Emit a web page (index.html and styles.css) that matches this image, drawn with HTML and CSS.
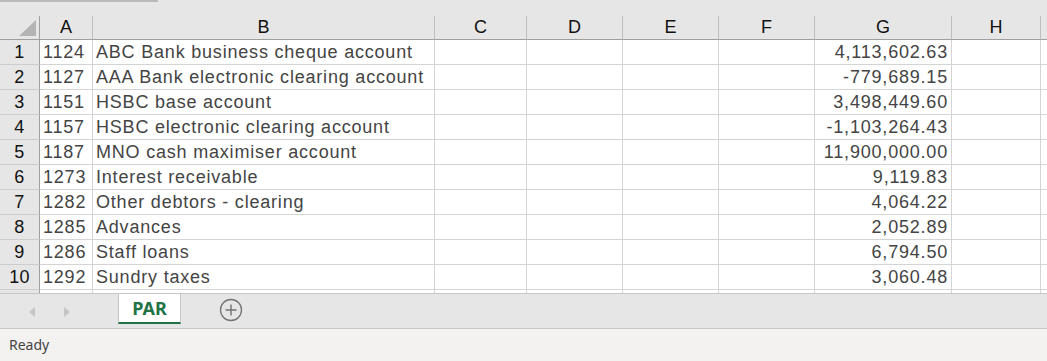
FILE: index.html
```html
<html lang="en">
<head>
    <meta charset="UTF-8">
    <title>PAR</title>
    <link rel="stylesheet" href="styles.css">
</head>
<body>
    <div class="window">
        <div class="top-strip"><div class="scroll-line"></div></div>
        <div class="sheet">
            <!-- header row -->
            <div class="hd corner">
                <svg width="17" height="16" viewBox="0 0 17 16"><polygon points="17,0 17,16 0,16" fill="#b4b4b4"/></svg>
            </div>
            <div class="hd">A</div>
            <div class="hd">B</div>
            <div class="hd">C</div>
            <div class="hd">D</div>
            <div class="hd">E</div>
            <div class="hd">F</div>
            <div class="hd">G</div>
            <div class="hd">H</div>
            <div class="hd"></div>

            <div class="rh">1</div><div class="c">1124</div><div class="c">ABC Bank business cheque account</div><div class="c"></div><div class="c"></div><div class="c"></div><div class="c"></div><div class="c num">4,113,602.63</div><div class="c"></div><div class="c"></div>
            <div class="rh">2</div><div class="c">1127</div><div class="c">AAA Bank electronic clearing account</div><div class="c"></div><div class="c"></div><div class="c"></div><div class="c"></div><div class="c num">-779,689.15</div><div class="c"></div><div class="c"></div>
            <div class="rh">3</div><div class="c">1151</div><div class="c">HSBC base account</div><div class="c"></div><div class="c"></div><div class="c"></div><div class="c"></div><div class="c num">3,498,449.60</div><div class="c"></div><div class="c"></div>
            <div class="rh">4</div><div class="c">1157</div><div class="c">HSBC electronic clearing account</div><div class="c"></div><div class="c"></div><div class="c"></div><div class="c"></div><div class="c num">-1,103,264.43</div><div class="c"></div><div class="c"></div>
            <div class="rh">5</div><div class="c">1187</div><div class="c">MNO cash maximiser account</div><div class="c"></div><div class="c"></div><div class="c"></div><div class="c"></div><div class="c num">11,900,000.00</div><div class="c"></div><div class="c"></div>
            <div class="rh">6</div><div class="c">1273</div><div class="c">Interest receivable</div><div class="c"></div><div class="c"></div><div class="c"></div><div class="c"></div><div class="c num">9,119.83</div><div class="c"></div><div class="c"></div>
            <div class="rh">7</div><div class="c">1282</div><div class="c">Other debtors - clearing</div><div class="c"></div><div class="c"></div><div class="c"></div><div class="c"></div><div class="c num">4,064.22</div><div class="c"></div><div class="c"></div>
            <div class="rh">8</div><div class="c">1285</div><div class="c">Advances</div><div class="c"></div><div class="c"></div><div class="c"></div><div class="c"></div><div class="c num">2,052.89</div><div class="c"></div><div class="c"></div>
            <div class="rh">9</div><div class="c">1286</div><div class="c">Staff loans</div><div class="c"></div><div class="c"></div><div class="c"></div><div class="c"></div><div class="c num">6,794.50</div><div class="c"></div><div class="c"></div>
            <div class="rh">10</div><div class="c">1292</div><div class="c">Sundry taxes</div><div class="c"></div><div class="c"></div><div class="c"></div><div class="c"></div><div class="c num">3,060.48</div><div class="c"></div><div class="c"></div>

            <!-- partly visible row 11 -->
            <div class="rh part"></div><div class="c part"></div><div class="c part"></div><div class="c part"></div><div class="c part"></div><div class="c part"></div><div class="c part"></div><div class="c part"></div><div class="c part"></div><div class="c part"></div>
        </div>

        <div class="tabbar">
            <div class="nav">
                <svg width="8" height="10" viewBox="0 0 8 10"><polygon points="7,0 7,10 1,5" fill="#c6c6c6"/></svg>
                <svg width="8" height="10" viewBox="0 0 8 10"><polygon points="1,0 1,10 7,5" fill="#c6c6c6"/></svg>
            </div>
            <div class="tab">PAR</div>
            <div class="add">
                <svg width="24" height="24" viewBox="0 0 24 24">
                    <circle cx="12" cy="12" r="10.5" fill="none" stroke="#737373" stroke-width="1.3"/>
                    <path d="M12 6.5v11M6.5 12h11" stroke="#737373" stroke-width="1.4"/>
                </svg>
            </div>
        </div>

        <div class="status">Ready</div>
    </div>
</body>
</html>
```

FILE: styles.css
```css
* {
  box-sizing: border-box;
}

body {
  margin: 0;
  background: #e6e6e6;
  font-family: "Liberation Sans", Arial, sans-serif;
}

.window {
  width: 1047px;
  height: 361px;
  overflow: hidden;
  display: flex;
  flex-direction: column;
}

.top-strip {
  height: 16px;
  background: #e6e6e6;
}

.scroll-line {
  width: 158px;
  height: 2px;
  background: #b9b9b9;
}

/* the grid of cells */
.sheet {
  display: grid;
  grid-template-columns: 40px 53px 342px 92px 96px 96px 96px 137px 89px 96px;
  grid-template-rows: 24px repeat(10, 25px) 3px;
  background: #fff;
  font-size: 18px;
  letter-spacing: 0.8px;
  width: 1047px;
  overflow: hidden;
}

.hd {
  background: #e6e6e6;
  border-right: 1px solid #bdbdbd;
  border-bottom: 1px solid #9f9f9f;
  color: #111;
  text-align: center;
  line-height: 23px;
  letter-spacing: 0;
}

.corner {
  display: flex;
  justify-content: flex-end;
  align-items: flex-start;
  padding: 4px 3px 0 0;
  border-right: 1px solid #9f9f9f;
}

.corner svg {
  display: block;
}

.rh {
  background: #e6e6e6;
  border-right: 1px solid #9f9f9f;
  border-bottom: 1px solid #cdcdcd;
  color: #111;
  text-align: center;
  line-height: 24px;
  letter-spacing: 0.3px;
}

.c {
  border-right: 1px solid #d4d4d4;
  border-bottom: 1px solid #d4d4d4;
  color: #444;
  padding: 0 3px 0 3px;
  line-height: 24px;
  white-space: nowrap;
  overflow: visible;
}

.num {
  text-align: right;
  padding-right: 3px;
}

.part {
  border-bottom: none;
}

/* sheet tabs */
.tabbar {
  height: 35px;
  background: #e6e6e6;
  border-top: 1px solid #c6c6c6;
  display: flex;
  align-items: flex-start;
}

.nav {
  width: 118px;
  display: flex;
  gap: 27px;
  padding: 13px 0 0 28px;
}

.nav svg {
  display: block;
}

.tab {
  width: 63px;
  height: 30px;
  background: #fff;
  border-left: 1px solid #c6c6c6;
  border-right: 1px solid #c6c6c6;
  border-bottom: 2px solid #217346;
  color: #217346;
  font-family: "Noto Sans", "Open Sans", sans-serif;
  font-weight: bold;
  font-size: 18px;
  text-align: center;
  line-height: 28px;
}

.add {
  padding: 4px 0 0 38px;
}

.add svg {
  display: block;
}

/* status bar */
.status {
  flex: 1;
  background: #f3f2f1;
  border-top: 1px solid #c8c8c8;
  color: #444;
  font-family: "Noto Sans", "Open Sans", sans-serif;
  font-size: 14px;
  padding: 6px 0 0 9px;
}
```
